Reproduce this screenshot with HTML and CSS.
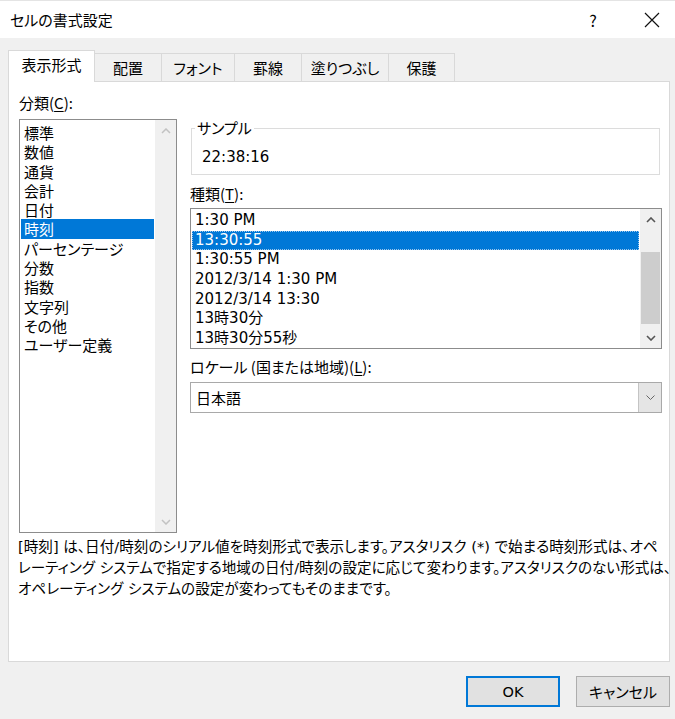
FILE: index.html
```html
<!DOCTYPE html>
<html lang="ja">
<head>
<meta charset="utf-8">
<title>セルの書式設定</title>
<link rel="stylesheet" href="styles.css">
</head>
<body>
<div class="dialog">
  <header class="titlebar">
    <span class="title">セルの書式設定</span>
    <span class="help">?</span>
    <span class="close">
      <svg width="16" height="16" viewBox="0 0 16 16"><path d="M1 1 L15 15 M15 1 L1 15" stroke="#111" stroke-width="1.2" fill="none"/></svg>
    </span>
  </header>
  <div class="body">
    <nav class="tabs">
      <div class="tab active w-disp">表示形式</div>
      <div class="tab w-align">配置</div>
      <div class="tab w-font">フォント</div>
      <div class="tab w-border">罫線</div>
      <div class="tab w-fill">塗りつぶし</div>
      <div class="tab w-protect">保護</div>
    </nav>
    <section class="panel">
      <div class="columns">
        <div class="left">
          <div class="lbl">分類(<u>C</u>):</div>
          <div class="listbox cat">
            <ul class="items">
              <li>標準</li>
              <li>数値</li>
              <li>通貨</li>
              <li>会計</li>
              <li>日付</li>
              <li class="sel">時刻</li>
              <li>パーセンテージ</li>
              <li>分数</li>
              <li>指数</li>
              <li>文字列</li>
              <li>その他</li>
              <li>ユーザー定義</li>
            </ul>
            <div class="vscroll disabled">
              <div class="arrow"><svg width="10" height="6" viewBox="0 0 10 6"><path d="M1 5 L5 1 L9 5" stroke="#c2c2c2" stroke-width="1.5" fill="none"/></svg></div>
              <div class="track"></div>
              <div class="arrow"><svg width="10" height="6" viewBox="0 0 10 6"><path d="M1 1 L5 5 L9 1" stroke="#c2c2c2" stroke-width="1.5" fill="none"/></svg></div>
            </div>
          </div>
        </div>
        <div class="right">
          <fieldset class="sample">
            <legend>サンプル</legend>
            <div class="sample-val">22:38:16</div>
          </fieldset>
          <div class="lbl lbl-type">種類(<u>T</u>):</div>
          <div class="listbox types">
            <ul class="items">
              <li>1:30 PM</li>
              <li class="sel focus">13:30:55</li>
              <li>1:30:55 PM</li>
              <li>2012/3/14 1:30 PM</li>
              <li>2012/3/14 13:30</li>
              <li>13時30分</li>
              <li>13時30分55秒</li>
            </ul>
            <div class="vscroll">
              <div class="arrow"><svg width="10" height="6" viewBox="0 0 10 6"><path d="M1 5 L5 1 L9 5" stroke="#555" stroke-width="1.6" fill="none"/></svg></div>
              <div class="track"><div class="gap-top"></div><div class="thumb"></div></div>
              <div class="arrow"><svg width="10" height="6" viewBox="0 0 10 6"><path d="M1 1 L5 5 L9 1" stroke="#555" stroke-width="1.6" fill="none"/></svg></div>
            </div>
          </div>
          <div class="lbl lbl-locale">ロケール (国または地域)(<u>L</u>):</div>
          <div class="combo">
            <span class="combo-text">日本語</span>
            <span class="combo-btn"><svg width="9" height="5" viewBox="0 0 9 5"><path d="M0.5 0.5 L4.5 4.5 L8.5 0.5" stroke="#666" stroke-width="1" fill="none"/></svg></span>
          </div>
        </div>
      </div>
      <p class="desc">[時刻] は、日付/時刻のシリアル値を時刻形式で表示します。アスタリスク (*) で始まる時刻形式は、オペ<br>レーティング システムで指定する地域の日付/時刻の設定に応じて変わります。アスタリスクのない形式は、<br>オペレーティング システムの設定が変わってもそのままです。</p>
    </section>
    <div class="buttons">
      <button class="btn ok">OK</button>
      <button class="btn">キャンセル</button>
    </div>
  </div>
</div>
</body>
</html>
```

FILE: styles.css
```css
* { box-sizing: border-box; }
html, body { margin: 0; padding: 0; }
body {
  width: 675px;
  height: 719px;
  overflow: hidden;
  background: #f0f0f0;
  font-family: "Noto Sans CJK JP", "Noto Sans", sans-serif;
  font-feature-settings: "palt" 1;
  font-size: 15px;
  color: #000;
}
.dialog { width: 675px; height: 719px; display: flex; flex-direction: column; }

/* title bar */
.titlebar {
  height: 38px;
  background: #fff;
  display: flex;
  align-items: center;
  padding-left: 10px;
  border-top: 1px solid #e4e4e4;
}
.title { font-size: 15px; line-height: 20px; }
.help { margin-left: auto; width: 30px; text-align: center; font-size: 16px; line-height: 20px; }
.close { width: 46px; margin-left: 21px; display: flex; justify-content: center; align-items: center; }

/* body */
.body { flex: 1; display: flex; flex-direction: column; padding: 12px 5px 0 8px; }

.tabs { display: flex; align-items: flex-end; height: 31px; position: relative; z-index: 1; }
.tab {
  height: 28px;
  border: 1px solid #d9d9d9;
  border-bottom: none;
  background: #f0f0f0;
  display: flex;
  align-items: center;
  justify-content: center;
  margin-left: -1px;
  line-height: 20px;
}
.tab.active {
  height: 32px;
  margin-bottom: -1px;
  margin-left: 0;
  background: #fff;
  padding-bottom: 3px;
}
.w-disp { width: 87px; }
.w-align { width: 68px; }
.w-font { width: 74px; }
.w-border { width: 68px; }
.w-fill { width: 88px; }
.w-protect { width: 67px; }

.panel {
  height: 581px;
  width: 662px;
  background: #fff;
  border: 1px solid #d9d9d9;
  padding: 11px 7px 0 10px;
}
.columns { display: flex; gap: 13px; }
.left { width: 158px; display: flex; flex-direction: column; }
.right { width: 472px; display: flex; flex-direction: column; }

.lbl { line-height: 20px; height: 20px; }
.left .lbl { margin-bottom: 6px; }
.lbl u { text-decoration-thickness: 1px; text-underline-offset: 2px; }

/* list boxes */
.listbox {
  border: 1px solid #8c8c8c;
  display: flex;
  background: #fff;
}
.listbox .items {
  list-style: none;
  margin: 0;
  padding: 1px;
  flex: 1;
  overflow: hidden;
}
.listbox li {
  padding-left: 3px;
  white-space: nowrap;
}
.listbox li.sel { background: #0078d7; color: #fff; }
.listbox li.focus { outline: 1px dotted #9cc6ec; outline-offset: -1px; }

.cat { height: 414px; }
.cat .items { padding-top: 3px; }
.cat li { height: 19.3px; line-height: 19.3px; }

.vscroll {
  width: 21px;
  flex: none;
  background: #f0f0f0;
  display: flex;
  flex-direction: column;
}
.vscroll .arrow { height: 21px; display: flex; align-items: center; justify-content: center; }
.vscroll .track { flex: 1; display: flex; flex-direction: column; padding: 0 1px; }
.vscroll .gap-top { height: 22px; }
.vscroll .thumb { height: 72px; background: #cdcdcd; }

/* latin-heavy text uses wider latin glyphs */
.types li, .sample-val, .desc, .btn.ok {
  font-family: "DejaVu Sans", "Noto Sans CJK JP", sans-serif;
}

/* sample */
.sample {
  margin: 26px 2px 0 1px;
  padding: 0 0 7px 3px;
  border: 1px solid #dcdcdc;
  min-width: 0;
  flex: none;
}
.sample legend { padding: 0 2px; line-height: 18px; }
.sample-val { padding: 10px 0 0 7px; height: 30px; line-height: 20px; }

.lbl-type { margin-top: 9px; margin-bottom: 4px; }
.types { height: 141px; flex: none; }
.types .items { padding-top: 2px; }
.types li { height: 19.7px; line-height: 19.7px; }

.lbl-locale { margin-top: 8px; margin-bottom: 5px; }
.combo {
  height: 31px;
  border: 1px solid #a9a9a9;
  display: flex;
  align-items: stretch;
  background: #fff;
}
.combo-text { flex: 1; padding-left: 5px; display: flex; align-items: center; }
.combo-btn {
  width: 23px;
  background: #e5e5e5;
  border-left: 1px solid #c4c4c4;
  display: flex;
  align-items: center;
  justify-content: center;
}

/* description */
.desc {
  margin: 3px 0 0 -1px;
  font-size: 14.6px;
  line-height: 21px;
  white-space: nowrap;
}

/* buttons */
.buttons { display: flex; justify-content: flex-end; gap: 16px; margin-top: 14px; }
.btn {
  width: 94px;
  height: 31px;
  background: #e1e1e1;
  border: 1px solid #adadad;
  font-family: inherit;
  font-feature-settings: "palt" 1;
  font-size: 15px;
  color: #000;
  padding: 0;
}
.btn.ok { border: 2px solid #0078d7; font-size: 14.5px; }
```
